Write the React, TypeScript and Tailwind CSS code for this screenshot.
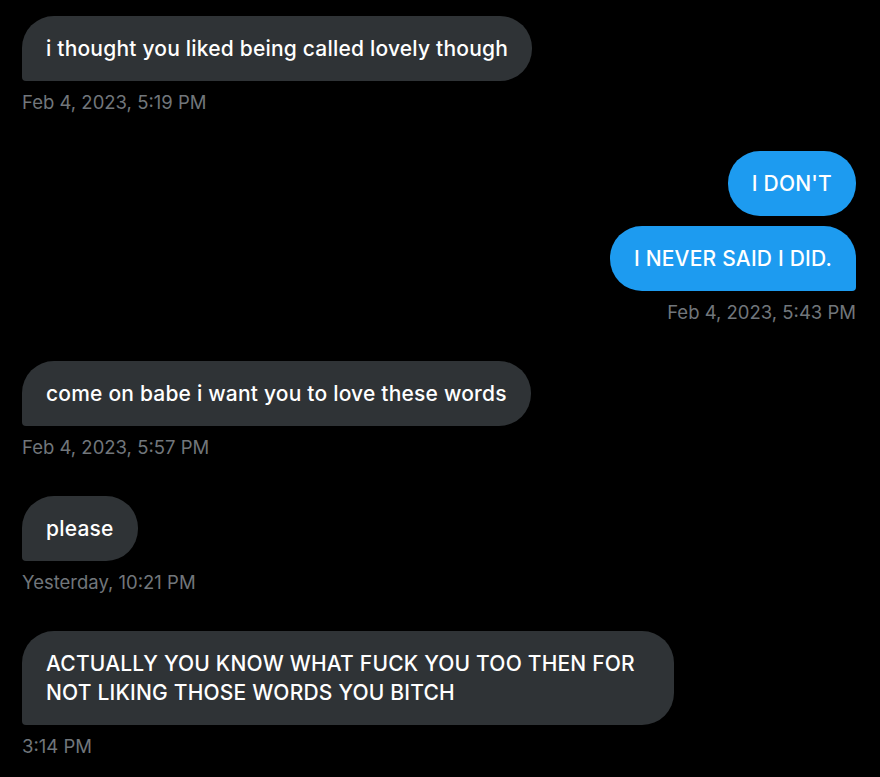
const font = { fontFamily: "Inter, 'Noto Sans', sans-serif" };

type Msg = {
  text: string;
  tail?: boolean;
};

type Group = {
  mine?: boolean;
  messages: Msg[];
  time: string;
};

const GROUPS: Group[] = [
  { messages: [{ text: "i thought you liked being called lovely though", tail: true }], time: "Feb 4, 2023, 5:19 PM" },
  {
    mine: true,
    messages: [{ text: "I DON'T" }, { text: "I NEVER SAID I DID.", tail: true }],
    time: "Feb 4, 2023, 5:43 PM",
  },
  { messages: [{ text: "come on babe i want you to love these words", tail: true }], time: "Feb 4, 2023, 5:57 PM" },
  { messages: [{ text: "please", tail: true }], time: "Yesterday, 10:21 PM" },
  {
    messages: [{ text: "ACTUALLY YOU KNOW WHAT FUCK YOU TOO THEN FOR NOT LIKING THOSE WORDS YOU BITCH", tail: true }],
    time: "3:14 PM",
  },
];

function Bubble({ msg, mine }: { msg: Msg; mine?: boolean }) {
  const shape = mine
    ? msg.tail
      ? "rounded-[32px] rounded-br-[4px]"
      : "rounded-[32px]"
    : msg.tail
      ? "rounded-[32px] rounded-bl-[4px]"
      : "rounded-[32px]";
  const color = mine ? "bg-[#1d9bf0]" : "bg-[#2f3336]";
  return (
    <div className={`max-w-[652px] px-6 py-[18px] text-[21px] font-medium leading-[29px] tracking-[0.2px] text-white ${shape} ${color}`}>
      {msg.text}
    </div>
  );
}

export default function App() {
  return (
    <div className="min-h-[777px] w-[880px] bg-black pl-[22px] pr-6 pt-4" style={font}>
      {GROUPS.map((g, i) => (
        <div key={i} className={`flex flex-col pb-[37px] ${g.mine ? "items-end" : "items-start"}`}>
          <div className={`flex flex-col gap-[10px] ${g.mine ? "items-end" : "items-start"}`}>
            {g.messages.map((m, j) => (
              <Bubble key={j} msg={m} mine={g.mine} />
            ))}
          </div>
          <div className="mt-[9px] text-[18.5px] leading-[24px] text-[#71767b]">{g.time}</div>
        </div>
      ))}
    </div>
  );
}
